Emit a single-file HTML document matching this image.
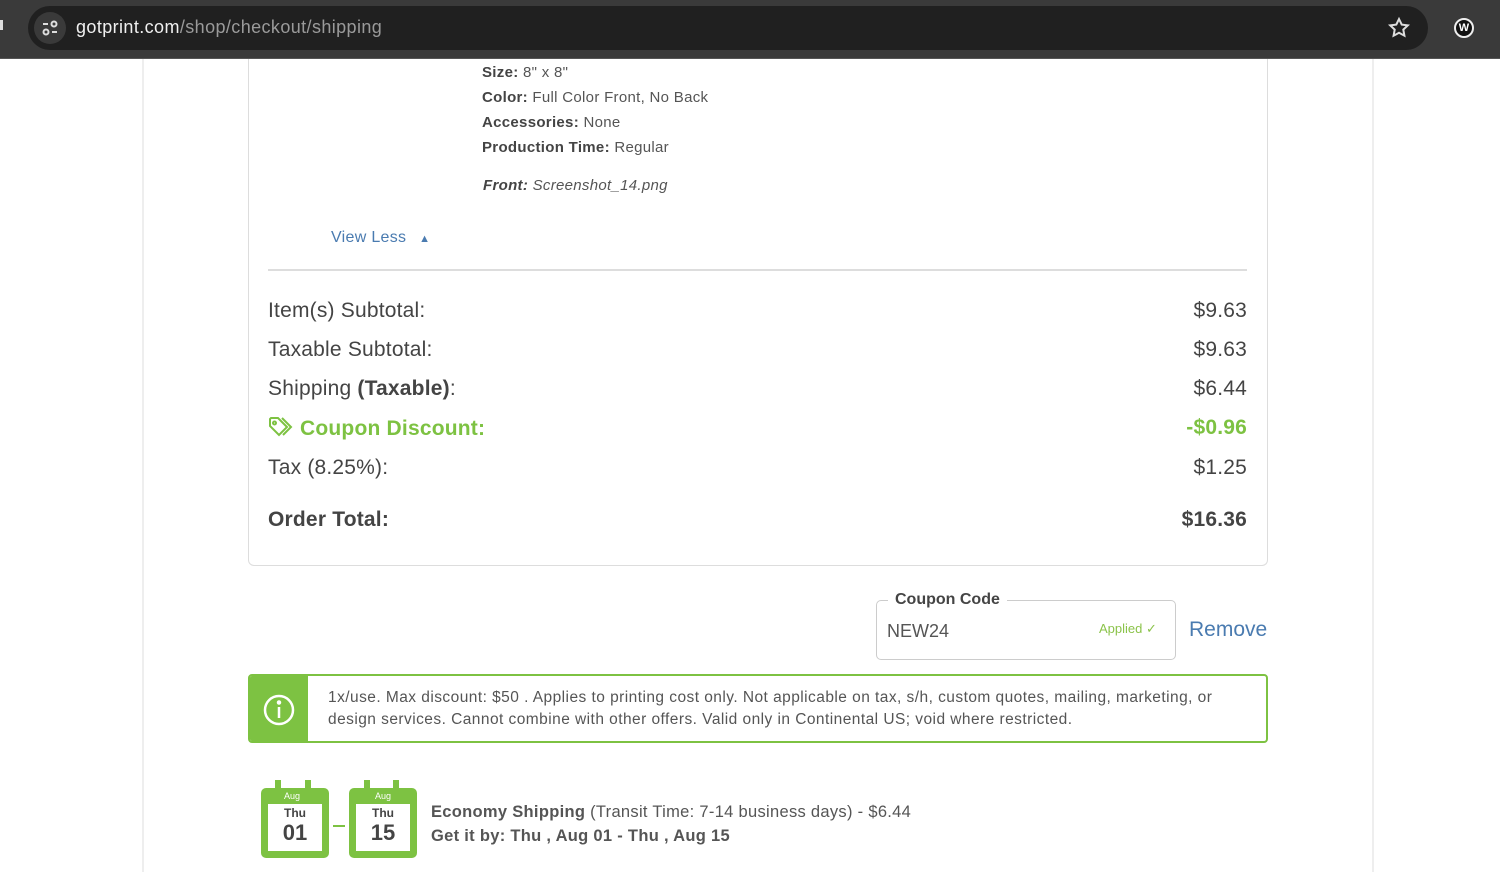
<!DOCTYPE html>
<html><head><meta charset="utf-8"><style>
*{margin:0;padding:0;box-sizing:border-box}
body{width:1500px;height:872px;overflow:hidden;background:#fff;font-family:"Liberation Sans",sans-serif;color:#444;position:relative}
.top{position:absolute;left:0;top:0;width:1500px;height:59px;background:#3a3a3a;border-bottom:1px solid #555;z-index:2}
.omni{position:absolute;left:28px;top:6px;width:1400px;height:44px;border-radius:22px;background:#202020}
.ic{position:absolute;left:34px;top:12px;width:32px;height:32px;border-radius:16px;background:#3a3a3a}
.url{position:absolute;left:76px;top:17px;font-size:18px;letter-spacing:0.4px;color:#9a9a9a}
.url b{font-weight:normal;color:#f0f0f0}
.col{position:absolute;top:59px;bottom:0;width:2px;background:#eee}
.card{position:absolute;left:248px;top:59px;width:1020px;height:507px;border:1px solid #ddd;border-top:none;border-radius:0 0 6px 6px}
.a{position:absolute;font-size:15px;color:#555;letter-spacing:0.3px}
.a b{color:#444}
.row{position:absolute;left:268px;width:979px;font-size:21px;color:#444;display:flex;justify-content:space-between;letter-spacing:0.2px}
</style></head><body>
<div class="top">
<div style="position:absolute;left:0;top:20px;width:3px;height:10px;background:#ddd"></div>
<div class="omni"></div>
<div class="ic"><svg width="32" height="32" viewBox="0 0 32 32" fill="none" stroke="#ddd" stroke-width="2"><line x1="9" y1="12" x2="14" y2="12"/><circle cx="20" cy="12" r="2.5"/><line x1="18" y1="20" x2="23" y2="20"/><circle cx="12" cy="20" r="2.5"/></svg></div>
<div class="url"><b>gotprint.com</b>/shop/checkout/shipping</div>
<svg style="position:absolute;left:1387px;top:16px" width="24" height="24" viewBox="0 0 24 24" fill="none" stroke="#ddd" stroke-width="2"><path d="M12 3l2.7 5.6 6.1.8-4.5 4.2 1.1 6.1L12 16.8 6.6 19.7l1.1-6.1L3.2 9.4l6.1-.8z"/></svg>
<div style="position:absolute;left:1454px;top:18px;width:20px;height:20px;border-radius:10px;border:2px solid #eee;background:#111;color:#fff;font-size:11px;font-weight:bold;text-align:center;line-height:16px">W</div>
</div>
<div class="col" style="left:142px"></div><div class="col" style="left:1372px"></div>
<div class="card"></div>
<div class="a" style="left:482px;top:64px"><b>Size:</b> 8" x 8"</div>
<div class="a" style="left:482px;top:89px"><b>Color:</b> Full Color Front, No Back</div>
<div class="a" style="left:482px;top:114px"><b>Accessories:</b> None</div>
<div class="a" style="left:482px;top:139px"><b>Production Time:</b> Regular</div>
<div class="a" style="left:483px;top:177px;font-style:italic"><b>Front:</b> Screenshot_14.png</div>
<div class="a" style="left:331px;top:229px;color:#4a7bb0;font-size:16px">View Less <span style="font-size:11px;margin-left:8px">&#9650;</span></div>
<div style="position:absolute;left:268px;top:269px;width:979px;height:2px;background:#ddd"></div>
<div class="row" style="top:299px"><span>Item(s) Subtotal:</span><span>$9.63</span></div>
<div class="row" style="top:338px"><span>Taxable Subtotal:</span><span>$9.63</span></div>
<div class="row" style="top:377px"><span>Shipping <b>(Taxable)</b>:</span><span>$6.44</span></div>
<div class="row" style="top:416px;color:#7dc242;font-weight:bold"><span><svg width="28" height="22" viewBox="0 0 28 22" fill="none" stroke="#7dc242" stroke-width="2" style="vertical-align:-3px;margin-right:4px"><path d="M2 3v7l9 9 8-8-9-9H3z"/><circle cx="6.5" cy="7" r="1.5"/><path d="M14 2l9 9-8 8"/></svg>Coupon Discount:</span><span>-$0.96</span></div>
<div class="row" style="top:456px"><span>Tax (8.25%):</span><span>$1.25</span></div>
<div class="row" style="top:508px;font-weight:bold"><span>Order Total:</span><span>$16.36</span></div>
<div style="position:absolute;left:876px;top:600px;width:300px;height:60px;border:1px solid #ccc;border-radius:5px"></div>
<div style="position:absolute;left:888px;top:591px;background:#fff;padding:0 7px;font-size:16px;font-weight:bold;color:#444">Coupon Code</div>
<div style="position:absolute;left:887px;top:621px;font-size:18px;color:#555">NEW24</div>
<div style="position:absolute;left:1099px;top:621px;font-size:13px;color:#8bc34a">Applied &#10003;</div>
<div style="position:absolute;left:1189px;top:618px;font-size:21px;color:#4a7bb0">Remove</div>
<div style="position:absolute;left:248px;top:674px;width:1020px;height:69px;border:2px solid #7dc242;border-radius:4px;overflow:hidden">
<div style="position:absolute;left:0;top:0;width:58px;height:100%;background:#7dc242"></div>
<svg style="position:absolute;left:12px;top:17px" width="34" height="34" viewBox="0 0 34 34" fill="none" stroke="#fff" stroke-width="2.5"><circle cx="17" cy="17" r="14"/><line x1="17" y1="14" x2="17" y2="25"/><circle cx="17" cy="9.5" r="1" fill="#fff"/></svg>
<div style="position:absolute;left:78px;top:11px;font-size:15.5px;letter-spacing:0.45px;line-height:22px;color:#555;white-space:nowrap">1x/use. Max discount: $50 . Applies to printing cost only. Not applicable on tax, s/h, custom quotes, mailing, marketing, or<br>design services. Cannot combine with other offers. Valid only in Continental US; void where restricted.</div>
</div>
<div style="position:absolute;left:261px;top:788px;width:68px;height:70px;background:#7dc242;border-radius:5px"></div>
<div style="position:absolute;left:349px;top:788px;width:68px;height:70px;background:#7dc242;border-radius:5px"></div>
<div style="position:absolute;left:275px;top:780px;width:6px;height:10px;background:#7dc242"></div><div style="position:absolute;left:305px;top:780px;width:6px;height:10px;background:#7dc242"></div>
<div style="position:absolute;left:364px;top:780px;width:6px;height:10px;background:#7dc242"></div><div style="position:absolute;left:393px;top:780px;width:6px;height:10px;background:#7dc242"></div>
<div style="position:absolute;left:333px;top:825px;width:12px;height:2px;background:#7dc242"></div>
<div style="position:absolute;left:268px;top:804px;width:54px;height:47px;background:#fff;text-align:center;color:#444;font-weight:bold"><div style="font-size:12px;margin-top:2px">Thu</div><div style="font-size:22px">01</div></div>
<div style="position:absolute;left:356px;top:804px;width:54px;height:47px;background:#fff;text-align:center;color:#444;font-weight:bold"><div style="font-size:12px;margin-top:2px">Thu</div><div style="font-size:22px">15</div></div>
<div style="position:absolute;left:284px;top:791px;font-size:9px;color:#fff">Aug</div><div style="position:absolute;left:375px;top:791px;font-size:9px;color:#fff">Aug</div>
<div style="position:absolute;left:431px;top:800px;font-size:16.5px;letter-spacing:0.3px;line-height:24px;color:#555"><b>Economy Shipping</b> (Transit Time: 7-14 business days) - $6.44<br><b>Get it by: Thu , Aug 01 - Thu , Aug 15</b></div>
</body></html>
